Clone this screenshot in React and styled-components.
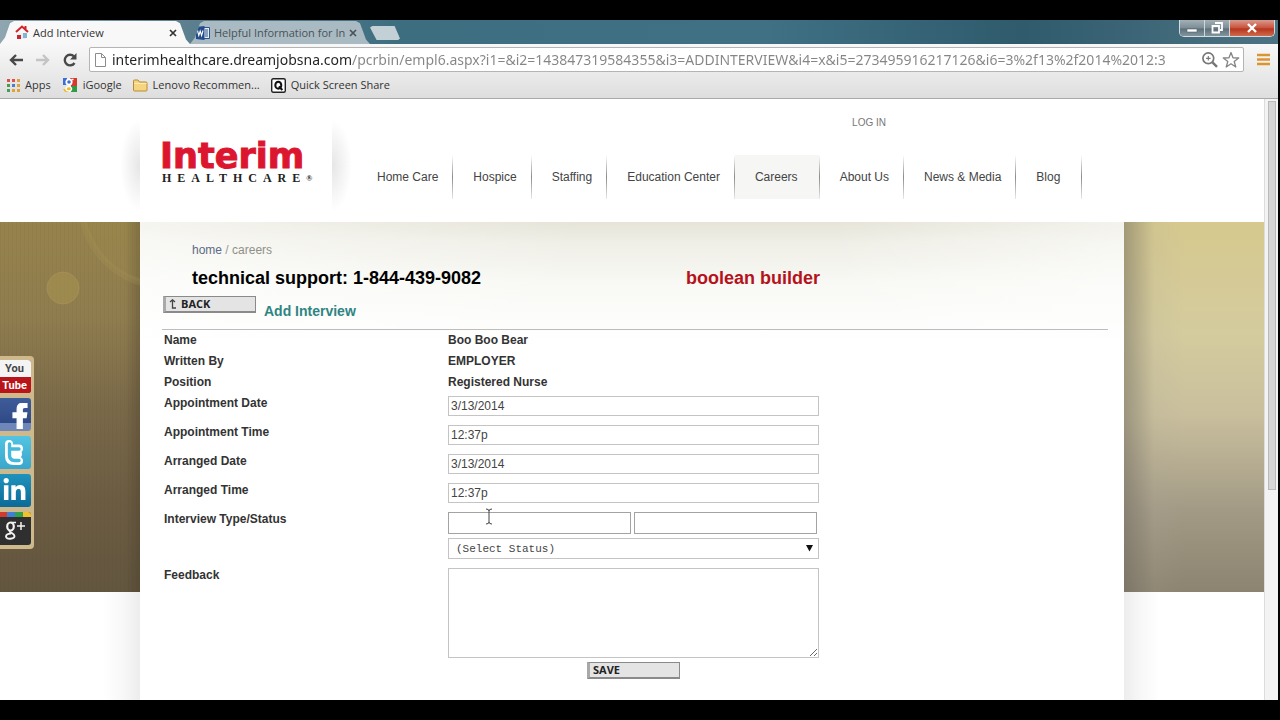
import React from "react";
import styled, { createGlobalStyle } from "styled-components";
import { FaFacebookF, FaLinkedinIn } from "react-icons/fa";

const GlobalStyle = createGlobalStyle`
  * { box-sizing: border-box; }
  body {
    margin: 0;
    background: #000;
    color: #333;
    font: 12px/16px "Liberation Sans", Arial, sans-serif;
  }
  h1, h2, p, ul { margin: 0; padding: 0; }
  button { cursor: pointer; }
`;

const chromeFont = `"Open Sans", "Noto Sans", sans-serif`;

/* ---------- browser window ---------- */

const Screen = styled.div`
  display: flex;
  flex-direction: column;
  min-height: 100vh;
  padding: 20px 2px 20px 0;
`;

const TitleBar = styled.div`
  display: flex;
  align-items: flex-end;
  height: 24px;
  background: linear-gradient(90deg, #8fa6b0 0, #5b7f8e 190px, #3d6e80 400px, #3f7084 60%, #2f5b6c 80%, #4c7384 100%);
`;

const TabShape = styled.div`
  display: flex;
  align-items: center;
  width: ${(p) => p.$width}px;
  height: 23px;
  padding: 0 12px 0 ${(p) => p.$inset}px;
  background: ${(p) => (p.$active ? "#f8f8f8" : "#a9bac2")};
  clip-path: polygon(0 100%, 5px 72%, 10px 10%, 14px 0, calc(100% - 14px) 0, calc(100% - 10px) 10%, calc(100% - 4px) 80%, 100% 100%);
  font: 11px/16px ${chromeFont};
  color: ${(p) => (p.$active ? "#333" : "#4a5358")};
`;

const TabTitle = styled.span`
  flex: 1;
  min-width: 0;
  margin-left: 4px;
  white-space: nowrap;
`;

const PlainButton = styled.button`
  display: inline-flex;
  align-items: center;
  justify-content: center;
  flex: none;
  padding: 0;
  border: 0;
  background: none;
  color: inherit;
`;

const TabClose = styled(PlainButton)`
  width: 10px;
  height: 14px;
  margin-left: 4px;
`;

const NewTab = styled.button`
  width: 30px;
  height: 14px;
  margin: 0 auto 4px 0;
  padding: 0;
  border: 0;
  background: #c3d0d6;
  clip-path: polygon(0 10%, 8% 0, 82% 0, 100% 90%, 94% 100%, 22% 100%);
`;

const WindowButtons = styled.div`
  display: flex;
  align-self: flex-start;
  height: 17px;
  margin-right: 3px;
  overflow: hidden;
  border: 1px solid #d2dbdf;
  border-top: 0;
  border-radius: 0 0 5px 5px;
`;

const WindowButton = styled(PlainButton)`
  width: ${(p) => (p.$close ? 44 : 25)}px;
  border-right: ${(p) => (p.$close ? 0 : "1px solid #cfd8dc")};
  background: ${(p) =>
    p.$close
      ? "linear-gradient(#d99a8e, #c9523c 50%, #b5351d 55%, #d26a4c)"
      : "linear-gradient(#a3b0b6, #7d8d95 50%, #5c6f78 55%, #83949c)"};
`;

const Toolbar = styled.div`
  display: flex;
  align-items: center;
  height: 31px;
  padding: 0 8px;
  background: linear-gradient(#f8f8f8, #e9e9e9);
`;

const NavButton = styled(PlainButton)`
  width: 16px;
  height: 20px;
  margin-right: 11px;
  color: ${(p) => (p.$dim ? "#c4c4c4" : "#484848")};
`;

const AddressBar = styled.div`
  display: flex;
  flex: 1;
  align-items: center;
  min-width: 0;
  height: 25px;
  padding: 0 3px 0 5px;
  border: 1px solid #b4b4b4;
  border-radius: 2px;
  background: #fff;
  color: #777;
`;

const AddressInput = styled.input`
  flex: 1;
  min-width: 0;
  margin: 0 0 0 6px;
  padding: 0;
  border: 0;
  outline: 0;
  background: linear-gradient(90deg, #222 239px, #858585 239px);
  background-clip: text;
  -webkit-background-clip: text;
  -webkit-text-fill-color: transparent;
  font: 14px/20px "Noto Sans", sans-serif;
`;

const BarIcon = styled(PlainButton)`
  width: 18px;
  height: 18px;
  margin-left: 3px;
`;

const MenuButton = styled(PlainButton)`
  width: 14px;
  height: 16px;
  margin-left: 12px;
`;

const Bookmarks = styled.nav`
  display: flex;
  align-items: center;
  gap: 11px;
  height: 24px;
  padding: 0 7px 3px;
  border-bottom: 1px solid #a9a9a9;
  background: linear-gradient(#e9e9e9, #dedede);
`;

const Bookmark = styled.a`
  display: flex;
  align-items: center;
  gap: 5px;
  color: #333;
  font: 11px/16px ${chromeFont};
  text-decoration: none;
  white-space: nowrap;
`;

const Viewport = styled.div`
  display: flex;
  flex: 1;
  background: #fff;
`;

const Page = styled.div`
  display: flex;
  flex: 1;
  flex-direction: column;
  min-width: 0;
`;

const ScrollTrack = styled.div`
  flex: none;
  width: 14px;
  padding: 2px 2px 0 3px;
  border-left: 1px solid #dcdcdc;
  background: #f3f3f3;
`;

const ScrollThumb = styled.div`
  height: 65%;
  border: 1px solid #b9b9b9;
  background: #d6d6d6;
`;

/* ---------- site header ---------- */

const Columns = styled.div`
  display: grid;
  grid-template-columns: minmax(0, 1fr) minmax(0, 984px) minmax(0, 1fr);
`;

const SiteHeader = styled.header`
  display: flex;
  grid-column: 2;
  gap: 25px;
  height: 123px;
`;

const LogoCard = styled.a`
  position: relative;
  flex: none;
  width: 192px;
  padding: 43px 0 0 20px;
  color: #222;
  text-decoration: none;
  &::before, &::after {
    content: "";
    position: absolute;
    top: 20px;
    bottom: 10px;
    width: 20px;
  }
  &::before {
    right: 100%;
    background: radial-gradient(ellipse at right, #e6e6e6, #fff 70%);
  }
  &::after {
    left: 100%;
    background: radial-gradient(ellipse at left, #e6e6e6, #fff 70%);
  }
`;

const LogoName = styled.div`
  color: #dd1630;
  font: bold 35px/28px "DejaVu Sans", sans-serif;
  -webkit-text-stroke: 1px #dd1630;
`;

const LogoSub = styled.div`
  display: flex;
  align-items: flex-end;
  padding: 2px 0 0 2px;
  font: bold 12px/12px "Liberation Serif", serif;
  letter-spacing: 6px;
`;

const Registered = styled.span`
  font-size: 8px;
  line-height: 10px;
  letter-spacing: 0;
`;

const HeaderRight = styled.div`
  display: flex;
  flex: 1;
  flex-direction: column;
  padding-top: 18px;
`;

const LoginLink = styled.a`
  align-self: flex-end;
  margin: 0 238px 26px 0;
  color: #777;
  font-size: 10px;
  line-height: 12px;
  text-decoration: none;
`;

const MainNav = styled.nav`
  display: flex;
`;

const NavLink = styled.a`
  padding: 0 ${(p) => (p.$wide ? 22 : 15)}px 0 20px;
  background:
    linear-gradient(#fff, #8c8c88 50%, #e8e8e6) right / 1px 100% no-repeat,
    ${(p) => (p.$current ? "#f6f6f5" : "#fff")};
  color: #444;
  line-height: 44px;
  text-decoration: none;
  white-space: nowrap;
`;

/* ---------- page body ---------- */

const Body = styled(Columns)`
  flex: 1;
`;

const Side = styled.div`
  position: relative;
  display: flex;
  flex-direction: column;
`;

const Backdrop = styled.div`
  height: 370px;
  overflow: hidden;
  background: ${(p) =>
    p.$right
      ? "linear-gradient(90deg, rgba(110,105,95,0.5), rgba(170,165,150,0.12) 30px, transparent 60px), linear-gradient(#d6c98e, #d4cb9e 30%, #c9bf9d 52%, #a39a86 78%, #8c8370)"
      : "repeating-linear-gradient(90deg, rgba(70,60,40,0.05) 0 1px, transparent 1px 4px), linear-gradient(90deg, transparent 125px, rgba(60,50,35,0.3)), linear-gradient(#95824c, #907d4f 25%, #7a6949 50%, #6c5c42 75%, #63563f)"};
`;

const Shade = styled.div`
  flex: 1;
  background: linear-gradient(${(p) => (p.$right ? "to right" : "to left")}, #ededed, #f8f8f8 18px, #fff 36px);
`;

const Social = styled.nav`
  position: absolute;
  top: 134px;
  left: 0;
  display: flex;
  flex-direction: column;
  gap: 5px;
  padding: 4px 3px 4px 0;
  border-radius: 0 4px 4px 0;
  background: #cdb98c;
`;

const SocialLink = styled.a`
  display: flex;
  flex-direction: column;
  justify-content: center;
  width: 31px;
  height: 33px;
  overflow: hidden;
  border-radius: 0 3px 3px 0;
  background: ${(p) => p.$bg};
  color: #fff;
  text-decoration: none;
`;

const TubeLine = styled.span`
  padding-right: 2px;
  background: ${(p) => (p.$red ? "#b9141a" : "#f4f4f4")};
  color: ${(p) => (p.$red ? "#fff" : "#444")};
  font: bold 11px/17px Roboto, sans-serif;
  text-align: center;
`;

const Panel = styled.main`
  padding: 20px 16px 15px 22px;
  background:
    linear-gradient(90deg, rgba(255,255,255,0.6), transparent 45%, transparent 70%, rgba(255,255,255,0.5)) 0 0 / 100% 120px no-repeat,
    linear-gradient(#e6e4d8, #efeee6 20px, #f8f8f4 60px, #fff 120px);
`;

const Crumbs = styled.nav`
  padding-left: 30px;
  color: #999;
`;

const CrumbLink = styled.a`
  color: ${(p) => (p.$current ? "#8f9086" : "#5b6b85")};
  text-decoration: none;
`;

const Headline = styled.div`
  display: flex;
  margin-top: 8px;
  padding-left: 30px;
  color: #000;
  font: bold 18px/24px "Liberation Sans", Arial, sans-serif;
`;

const Support = styled.p`
  flex: 0 1 494px;
`;

const BuilderLink = styled.a`
  color: #b5121b;
  text-decoration: none;
`;

const TitleRow = styled.div`
  display: flex;
  gap: 8px;
  padding: 6px 0 9px 1px;
  border-bottom: 1px solid #bdbdbd;
`;

const Title = styled.h1`
  margin-top: 6px;
  color: #2e8583;
  font-size: 14px;
  line-height: 18px;
`;

const ActionButton = styled.button`
  display: flex;
  align-items: center;
  gap: 4px;
  width: 93px;
  height: 17px;
  padding: 0 3px;
  border: 1px solid #8a8a8a;
  border-width: 1px 1px 2px 3px;
  border-left-color: #a9a9a9;
  background: #e4e4e4;
  color: #222;
  font: bold 11px/14px ${chromeFont};
`;

const Row = styled.div`
  display: grid;
  grid-template-columns: 284px minmax(0, 371px);
  padding-left: 2px;
  font-weight: bold;
  line-height: 21px;
`;

const Field = styled.div`
  position: relative;
  display: flex;
  flex-direction: column;
  gap: 4px;
  padding: 3px 0 6px;
`;

const TextInput = styled.input`
  min-width: 0;
  width: 100%;
  height: ${(p) => (p.$tall ? 22 : 20)}px;
  padding: 0 2px;
  border: 1px solid ${(p) => (p.$tall ? "#a3a3a3" : "#c4c4c4")};
  border-radius: 0;
  background: #fff;
  color: #444;
  font: 12px/16px "Liberation Sans", Arial, sans-serif;
`;

const Pair = styled.div`
  display: flex;
  gap: 3px;
  padding-right: 2px;
`;

const SelectWrap = styled.div`
  position: relative;
  display: flex;
`;

const Select = styled.select`
  flex: 1;
  height: 21px;
  padding: 0 7px;
  border: 1px solid #c4c4c4;
  border-radius: 0;
  appearance: none;
  background: #fff;
  color: #444;
  font: 11px/16px "Liberation Mono", monospace;
`;

const SelectArrow = styled.svg`
  position: absolute;
  top: 7px;
  right: 6px;
  pointer-events: none;
`;

const Feedback = styled.textarea`
  width: 100%;
  height: 90px;
  padding: 2px;
  border: 1px solid #c4c4c4;
  border-radius: 0;
  background: #fff;
  font: 12px/16px "Liberation Sans", Arial, sans-serif;
  resize: both;
`;

const SaveLine = styled.div`
  display: flex;
  justify-content: center;
`;

const Pointer = styled.svg`
  position: absolute;
  top: -1px;
  left: 37px;
  pointer-events: none;
`;

/* ---------- drawings ---------- */

const HouseIcon = () => (
  <svg width="14" height="15" viewBox="0 0 14 15" aria-hidden="true">
    <path d="M1 7 7 1.5 13 7M10.5 1v3" fill="none" stroke="#d3222a" strokeWidth="2" />
    <path d="M3 8h8v6H3z" fill="#e9eef3" />
    <path d="M2 10h4v4H2z" fill="#c8252d" />
    <path d="M8 8h4v5H8z" fill="#86b4d0" />
  </svg>
);

const WordIcon = () => (
  <svg width="14" height="14" viewBox="0 0 14 14" aria-hidden="true">
    <path d="M7 1.500h6.500v11H7z" fill="#e8eef5" stroke="#2c5491" />
    <path d="M9 4h3M9 6h3M9 8h3M9 10h3" stroke="#2c5491" />
    <path d="M0 1 8.500 0v14L0 13z" fill="#234c8c" />
    <path d="M1.500 4.500 2.800 9.500 4.200 5 5.600 9.500 7 4.500" fill="none" stroke="#fff" strokeWidth="1.100" />
  </svg>
);

const CloseGlyph = () => (
  <svg width="8" height="8" viewBox="0 0 8 8" aria-hidden="true">
    <path d="M1 1l6 6M7 1 1 7" stroke="currentColor" strokeWidth="1.700" />
  </svg>
);

const ArrowIcon = ({ flip }) => (
  <svg width="16" height="14" viewBox="0 0 16 14" aria-hidden="true">
    <path
      d={flip ? "M1 7h12M8 2l5 5-5 5" : "M15 7H3M8 2 3 7l5 5"}
      fill="none"
      stroke="currentColor"
      strokeWidth="2.400"
    />
  </svg>
);

const ReloadIcon = () => (
  <svg width="16" height="16" viewBox="0 0 16 16" aria-hidden="true">
    <path d="M12.500 11A5.300 5.300 0 1 1 12 4.500" fill="none" stroke="currentColor" strokeWidth="2.400" />
    <path d="M14.500 1v6.500H8z" fill="currentColor" />
  </svg>
);

const DocIcon = () => (
  <svg width="11" height="14" viewBox="0 0 11 14" aria-hidden="true">
    <path d="M.5.5h6l4 4v9H.5zM6.500.5v4h4" fill="#fff" stroke="#8c8c8c" />
  </svg>
);

const ZoomIcon = () => (
  <svg width="18" height="18" viewBox="0 0 16 16" aria-hidden="true">
    <circle cx="6.500" cy="6.500" r="4.800" fill="none" stroke="#777" strokeWidth="1.500" />
    <path d="M6.500 4.500v4M4.500 6.500h4" stroke="#777" />
    <path d="m10.200 10.200 4 4" stroke="#777" strokeWidth="2.200" />
  </svg>
);

const StarIcon = () => (
  <svg width="18" height="18" viewBox="0 0 18 18" aria-hidden="true">
    <path
      d="m9 1.500 2 5.300 5.700.2-4.500 3.500 1.600 5.500L9 12.800 4.200 16l1.600-5.500L1.300 7l5.700-.2z"
      fill="#fff"
      stroke="#858585"
      strokeWidth="1.300"
      strokeLinejoin="round"
    />
  </svg>
);

const MenuIcon = () => (
  <svg width="13" height="13" viewBox="0 0 13 13" aria-hidden="true">
    <path d="M0 2h13M0 6.500h13M0 11h13" stroke="#dc9433" strokeWidth="2.600" />
  </svg>
);

const appColors = ["#d9534a", "#d9534a", "#e0a03a", "#4c9a55", "#4a7fc8", "#e0a03a", "#4c9a55", "#e0a03a", "#e0a03a"];
const AppsIcon = () => (
  <svg width="13" height="13" viewBox="0 0 13 13" aria-hidden="true">
    {appColors.map((c, i) => (
      <rect key={i} x={(i % 3) * 5} y={Math.floor(i / 3) * 5} width="3" height="3" fill={c} />
    ))}
  </svg>
);

const GoogleIcon = () => (
  <svg width="16" height="16" viewBox="0 0 16 16" aria-hidden="true">
    <path d="M1 1h4v7H1z" fill="#3c6fd1" />
    <path d="M8 1h7v8H9z" fill="#d8392b" />
    <path d="M9 9h6v6H9z" fill="#2f9a48" />
    <path d="M1 12h6v3H3z" fill="#f0b92d" />
    <circle cx="7" cy="5" r="2.700" fill="#3c6fd1" stroke="#fff" strokeWidth="1.800" />
    <path d="M9.500 2.500h2M7.500 8c-1.500 1.500 3 2 2 4.500S3.500 14 4 11.500s3-2 4-2" fill="#f0b92d" stroke="#fff" strokeWidth="1.500" />
  </svg>
);

const FolderIcon = () => (
  <svg width="15" height="13" viewBox="0 0 15 13" aria-hidden="true">
    <path d="M.5 2q0-1 1-1H5l1.500 2H13q1 0 1 1v7q0 1-1 1H1.500q-1 0-1-1z" fill="#f5d580" stroke="#b98b34" />
    <path d="M1.500 4.500h12" stroke="#fcecb8" />
  </svg>
);

const QuickIcon = () => (
  <svg width="15" height="15" viewBox="0 0 15 15" aria-hidden="true">
    <rect x=".7" y=".7" width="13.600" height="13.600" rx="1.500" fill="#fff" stroke="#222" strokeWidth="1.400" />
    <ellipse cx="7.300" cy="7.200" rx="3" ry="3.500" fill="none" stroke="#111" strokeWidth="2" />
    <path d="m7.800 8.500 3.600 3.500" stroke="#111" strokeWidth="2" />
  </svg>
);

const TwitterIcon = () => (
  <svg width="31" height="33" viewBox="0 0 31 33" aria-hidden="true">
    <path
      d="M9 8v12q0 5 5 5h5M9 12.500h10M9 18q1 0 9 0"
      fill="none"
      stroke="#fff"
      strokeWidth="8"
      strokeLinecap="round"
      strokeLinejoin="round"
    />
    <path
      d="M9.500 8v11q0 5.500 5 5.500H19M9.500 13H19"
      fill="none"
      stroke="#45b9dc"
      strokeWidth="3.400"
      strokeLinecap="round"
      strokeLinejoin="round"
    />
  </svg>
);

const PlusIcon = () => (
  <svg width="31" height="33" viewBox="0 0 31 33" aria-hidden="true">
    <path d="M0 0h7v5H0z" fill="#d3392c" />
    <path d="M7 0h8v5H7z" fill="#3f7fd8" />
    <path d="M15 0h8v5h-8z" fill="#2fa24b" />
    <path d="M23 0h8v5h-8z" fill="#f1c02c" />
    <g fill="none" stroke="#f3f3f3">
      <ellipse cx="10.500" cy="14.500" rx="3.300" ry="4" strokeWidth="2.200" />
      <path d="M11 10.500h5" strokeWidth="1.600" />
      <path d="M10 18.500c-2 2 4.500 2.500 4.500 5.500s-8.500 4-8.500.6c0-2.600 3.500-3 5-3" strokeWidth="1.900" />
      <path d="M21 10v8M17 14h8" strokeWidth="1.500" />
    </g>
  </svg>
);

const Bokeh = () => (
  <svg width="140" height="370" viewBox="0 0 140 370" aria-hidden="true">
    <circle cx="63" cy="66" r="16" fill="#a8934f" fillOpacity=".55" stroke="#a8955c" strokeOpacity=".6" />
    <circle cx="165" cy="-20" r="84" fill="#a8934f" fillOpacity=".16" stroke="#b09b5c" strokeOpacity=".2" strokeWidth="7" />
  </svg>
);

/* ---------- content ---------- */

const navItems = [
  { label: "Home Care" },
  { label: "Hospice" },
  { label: "Staffing" },
  { label: "Education Center" },
  { label: "Careers", current: true, wide: true },
  { label: "About Us" },
  { label: "News & Media" },
  { label: "Blog", wide: true },
];

const facts = [
  ["Name", "Boo Boo Bear"],
  ["Written By", "EMPLOYER"],
  ["Position", "Registered Nurse"],
];

const dates = [
  ["appointment-date", "Appointment Date", "3/13/2014"],
  ["appointment-time", "Appointment Time", "12:37p"],
  ["arranged-date", "Arranged Date", "3/13/2014"],
  ["arranged-time", "Arranged Time", "12:37p"],
];

const url =
  "interimhealthcare.dreamjobsna.com/pcrbin/empl6.aspx?i1=&i2=143847319584355&i3=ADDINTERVIEW&i4=x&i5=273495916217126&i6=3%2f13%2f2014%2012:3";

function Browser({ children }) {
  return (
    <Screen>
      <TitleBar>
        <TabShape $active $width={190} $inset={15}>
          <HouseIcon />
          <TabTitle>Add Interview</TabTitle>
          <TabClose aria-label="Close tab"><CloseGlyph /></TabClose>
        </TabShape>
        <TabShape $width={180} $inset={6}>
          <WordIcon />
          <TabTitle>Helpful Information for In</TabTitle>
          <TabClose aria-label="Close tab"><CloseGlyph /></TabClose>
        </TabShape>
        <NewTab aria-label="New tab" />
        <WindowButtons>
          <WindowButton aria-label="Minimize">
            <svg width="12" height="12" viewBox="0 0 12 12"><path d="M1 7h10v3H1z" fill="#fff" stroke="#56646b" strokeWidth=".6" /></svg>
          </WindowButton>
          <WindowButton aria-label="Restore">
            <svg width="12" height="12" viewBox="0 0 12 12"><path d="M4 1h7v7H9M1.500 4h6.500v6.500H1.500z" fill="none" stroke="#fff" strokeWidth="1.800" /></svg>
          </WindowButton>
          <WindowButton $close aria-label="Close">
            <svg width="10" height="10" viewBox="0 0 10 10"><path d="m1 1 8 8M9 1 1 9" stroke="#fff" strokeWidth="2.400" /></svg>
          </WindowButton>
        </WindowButtons>
      </TitleBar>
      <Toolbar>
        <NavButton aria-label="Back"><ArrowIcon /></NavButton>
        <NavButton $dim aria-label="Forward"><ArrowIcon flip /></NavButton>
        <NavButton aria-label="Reload"><ReloadIcon /></NavButton>
        <AddressBar>
          <DocIcon />
          <AddressInput aria-label="Address" defaultValue={url} />
          <BarIcon aria-label="Zoom"><ZoomIcon /></BarIcon>
          <BarIcon aria-label="Bookmark this page"><StarIcon /></BarIcon>
        </AddressBar>
        <MenuButton aria-label="Menu"><MenuIcon /></MenuButton>
      </Toolbar>
      <Bookmarks>
        <Bookmark href="#apps"><AppsIcon />Apps</Bookmark>
        <Bookmark href="#igoogle"><GoogleIcon />iGoogle</Bookmark>
        <Bookmark href="#lenovo"><FolderIcon />Lenovo Recommen...</Bookmark>
        <Bookmark href="#quick"><QuickIcon />Quick Screen Share</Bookmark>
      </Bookmarks>
      <Viewport>
        <Page>{children}</Page>
        <ScrollTrack><ScrollThumb /></ScrollTrack>
      </Viewport>
    </Screen>
  );
}

function InterviewForm() {
  return (
    <form onSubmit={(e) => e.preventDefault()}>
      {facts.map(([label, value]) => (
        <Row key={label}>
          <span>{label}</span>
          <span>{value}</span>
        </Row>
      ))}
      {dates.map(([id, label, value]) => (
        <Row key={id}>
          <label htmlFor={id}>{label}</label>
          <Field><TextInput id={id} defaultValue={value} /></Field>
        </Row>
      ))}
      <Row>
        <label htmlFor="interview-type">Interview Type/Status</label>
        <Field>
          <Pair>
            <TextInput $tall id="interview-type" />
            <TextInput $tall aria-label="Interview status" />
          </Pair>
          <SelectWrap>
            <Select aria-label="Status">
              <option>(Select Status)</option>
            </Select>
            <SelectArrow width="7" height="7" viewBox="0 0 7 7"><path d="M0 0h7L3.500 6.500z" fill="#111" /></SelectArrow>
          </SelectWrap>
          <Pointer width="8" height="17" viewBox="0 0 8 17" aria-hidden="true">
            <path d="M1 1q3 0 3 2v11q0 2-3 2M7 1q-3 0-3 2M7 16q-3 0-3-2" fill="none" stroke="#444" />
          </Pointer>
        </Field>
      </Row>
      <Row>
        <label htmlFor="feedback">Feedback</label>
        <Field>
          <Feedback id="feedback" />
          <SaveLine><ActionButton>SAVE</ActionButton></SaveLine>
        </Field>
      </Row>
    </form>
  );
}

export default function App() {
  return (
    <>
      <GlobalStyle />
      <Browser>
        <Columns>
          <SiteHeader>
            <LogoCard href="#home">
              <LogoName>Interim</LogoName>
              <LogoSub>HEALTHCARE<Registered>®</Registered></LogoSub>
            </LogoCard>
            <HeaderRight>
              <LoginLink href="#login">LOG IN</LoginLink>
              <MainNav>
                {navItems.map((n) => (
                  <NavLink key={n.label} href="#nav" $current={n.current} $wide={n.wide}>
                    {n.label}
                  </NavLink>
                ))}
              </MainNav>
            </HeaderRight>
          </SiteHeader>
        </Columns>
        <Body>
          <Side>
            <Backdrop><Bokeh /></Backdrop>
            <Shade />
            <Social>
              <SocialLink href="#youtube" $bg="#b9141a">
                <TubeLine>You</TubeLine>
                <TubeLine $red>Tube</TubeLine>
              </SocialLink>
              <SocialLink href="#facebook" aria-label="Facebook" $bg="linear-gradient(#3f5c9a, #2f4a86 75%, #6f86b8 76%)">
                <svg width="31" height="33" viewBox="0 0 31 33"><FaFacebookF x="7" y="5" size={26} stroke="#fff" strokeWidth="24" /></svg>
              </SocialLink>
              <SocialLink href="#twitter" aria-label="Twitter" $bg="linear-gradient(#52c4e2, #3aa6cc)">
                <TwitterIcon />
              </SocialLink>
              <SocialLink href="#linkedin" aria-label="LinkedIn" $bg="linear-gradient(#1f93bd, #0c6a97)">
                <svg width="31" height="33" viewBox="0 0 31 33"><FaLinkedinIn x="2" y="4" size={25} /></svg>
              </SocialLink>
              <SocialLink href="#googleplus" aria-label="Google Plus" $bg="#2f2f2f">
                <PlusIcon />
              </SocialLink>
            </Social>
          </Side>
          <Panel>
            <Crumbs>
              <CrumbLink href="#home">home</CrumbLink> / <CrumbLink $current href="#careers">careers</CrumbLink>
            </Crumbs>
            <Headline>
              <Support>technical support: 1-844-439-9082</Support>
              <BuilderLink href="#boolean">boolean builder</BuilderLink>
            </Headline>
            <TitleRow>
              <ActionButton>
                <svg width="8" height="10" viewBox="0 0 8 10" aria-hidden="true">
                  <path d="M1 3 3.500.8 6 3M3.500 1v8H7" fill="none" stroke="#444" strokeWidth="1.300" />
                </svg>
                BACK
              </ActionButton>
              <Title>Add Interview</Title>
            </TitleRow>
            <InterviewForm />
          </Panel>
          <Side>
            <Backdrop $right />
            <Shade $right />
          </Side>
        </Body>
      </Browser>
    </>
  );
}
